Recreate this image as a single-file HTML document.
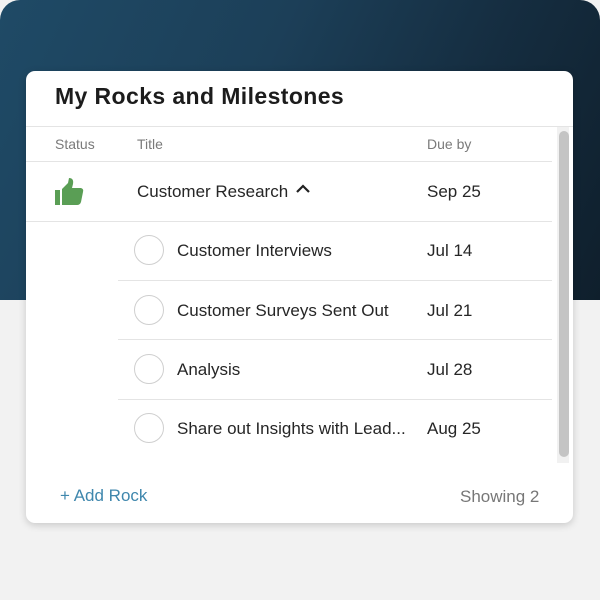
<!DOCTYPE html><html><head><style>
*{margin:0;padding:0;box-sizing:border-box}
body{width:600px;height:600px;background:#f2f2f2;font-family:"Liberation Sans",sans-serif;position:relative;overflow:hidden}
.bg{position:absolute;left:0;top:0;width:600px;height:300px;border-radius:20px 20px 0 0;background:linear-gradient(115deg,#1f4a66 0%,#1c3f58 40%,#152d40 70%,#0f1f2c 100%)}
.card{position:absolute;left:26px;top:71px;width:547px;height:452px;background:#fff;border-radius:9px;box-shadow:0 2px 8px rgba(0,0,0,.18);overflow:hidden}
.title{position:absolute;left:29px;top:12px;font-size:23px;font-weight:bold;color:#1c1c1c;letter-spacing:0.4px}
.hl{position:absolute;height:1px;background:#e4e4e4}
.t{position:absolute;font-size:17px;color:#262626;white-space:nowrap}
.h{position:absolute;font-size:14px;color:#7a7a7a}
.c{position:absolute;left:108px;width:30px;height:30px;border:1px solid #cfcfcf;border-radius:50%}
.sb{position:absolute;left:531px;top:56px;width:12px;height:336px;background:#f1f1f1}
.th{position:absolute;left:533px;top:60px;width:10px;height:326px;background:#c4c4c4;border-radius:5px}
</style></head><body>
<div class="bg"></div>
<div class="card">
<div class="title">My Rocks and Milestones</div>
<div class="hl" style="left:0;top:55px;width:547px"></div>
<div class="h" style="left:29px;top:65px">Status</div>
<div class="h" style="left:111px;top:65px">Title</div>
<div class="h" style="left:401px;top:65px">Due by</div>
<div class="hl" style="left:0;top:90px;width:526px"></div>
<svg style="position:absolute;left:29px;top:107px" width="29" height="28" viewBox="0 0 29 28"><rect x="0" y="12" width="5" height="15" fill="#5a9e55"/><path d="M7 11 L13 5 L14 0 Q19 0 18 6 L17 10 L26 10 Q29 11 28 14 L26 24 Q25 27 22 27 L7 27 Z" fill="#5a9e55"/></svg>
<div class="t" style="left:111px;top:111px">Customer Research</div>
<svg style="position:absolute;left:269px;top:112px" width="16" height="12"><path d="M2 9 L8 3 L14 9" stroke="#222" stroke-width="2.2" fill="none"/></svg>
<div class="t" style="left:401px;top:111px">Sep 25</div>
<div class="hl" style="left:0;top:150px;width:526px"></div>
<div class="c" style="top:164px"></div><div class="t" style="left:151px;top:170px">Customer Interviews</div><div class="t" style="left:401px;top:170px">Jul 14</div>
<div class="hl" style="left:92px;top:209px;width:434px"></div>
<div class="c" style="top:224px"></div><div class="t" style="left:151px;top:230px">Customer Surveys Sent Out</div><div class="t" style="left:401px;top:230px">Jul 21</div>
<div class="hl" style="left:92px;top:268px;width:434px"></div>
<div class="c" style="top:283px"></div><div class="t" style="left:151px;top:289px">Analysis</div><div class="t" style="left:401px;top:289px">Jul 28</div>
<div class="hl" style="left:92px;top:328px;width:434px"></div>
<div class="c" style="top:342px"></div><div class="t" style="left:151px;top:348px">Share out Insights with Lead...</div><div class="t" style="left:401px;top:348px">Aug 25</div>
<div class="sb"></div><div class="th"></div>
<div class="t" style="left:34px;top:415px;color:#3f87ad">+ Add Rock</div>
<div class="t" style="left:434px;top:416px;color:#777">Showing 2</div>
</div>
</body></html>
